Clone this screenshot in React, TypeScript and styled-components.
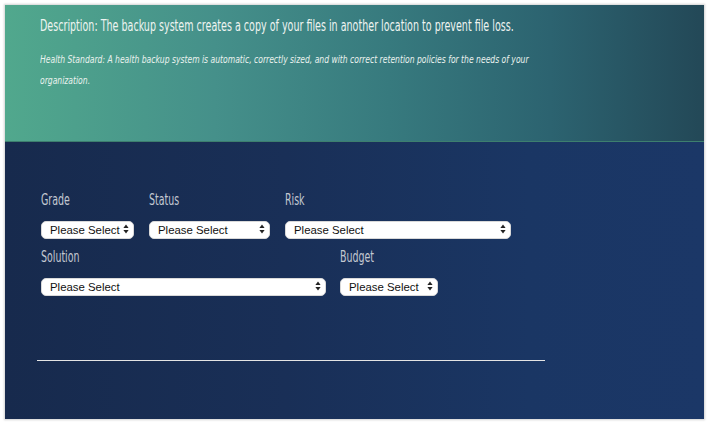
import React from "react";
import styled, { createGlobalStyle } from "styled-components";

const Global = createGlobalStyle`
  html, body { margin: 0; padding: 0; background: #ffffff; }
  body { width: 709px; height: 424px; overflow: hidden; }
`;

const CONDENSED = `"DejaVu Sans Condensed", "Liberation Sans", sans-serif`;

const Frame = styled.div`
  box-sizing: border-box;
  width: 709px;
  height: 424px;
  padding: 5px;
  background: #ffffff;
`;

const Card = styled.div`
  width: 699px;
  height: 414px;
  display: flex;
  flex-direction: column;
  box-shadow: 0 0 2px 1px rgba(0, 0, 0, 0.18);
  overflow: hidden;
`;

const Header = styled.header`
  box-sizing: border-box;
  height: 137px;
  padding: 11px 0 0 35px;
  background: linear-gradient(90deg, #51a88d 0%, #45908a 30%, #377a7e 55%, #2c6370 78%, #234857 100%);
  border-bottom: 1px solid #3d7f6e;
`;

const Description = styled.p`
  margin: 0;
  width: 680px;
  font-family: ${CONDENSED};
  font-size: 15px;
  line-height: 20px;
  color: #eef4f1;
  white-space: nowrap;
  transform: scaleX(0.708);
  transform-origin: left center;
`;

const Standard = styled.p`
  margin: 13px 0 0 0;
  width: 680px;
  font-family: ${CONDENSED};
  font-style: italic;
  font-size: 11px;
  line-height: 21px;
  color: #eaf2ee;
  transform: scaleX(0.772);
  transform-origin: left top;
`;

const Body = styled.main`
  flex: 1;
  box-sizing: border-box;
  padding: 50px 0 0 32px;
  background: linear-gradient(90deg, #172a4d 0%, #192f57 40%, #1a3664 75%, #1b3767 100%);
`;

const Form = styled.div`
  width: 508px;
  display: flex;
  flex-direction: column;
  gap: 11px;
  padding-left: 4px;
`;

const Row = styled.div<{ $gap: number }>`
  display: flex;
  gap: ${(p) => p.$gap}px;
`;

const Field = styled.div<{ $w: number }>`
  width: ${(p) => p.$w}px;
  display: flex;
  flex-direction: column;
  gap: 12px;
`;

const Label = styled.label`
  display: block;
  font-family: ${CONDENSED};
  font-size: 15px;
  line-height: 16px;
  color: #c3c8d1;
  white-space: nowrap;
  transform: scaleX(0.7);
  transform-origin: left center;
`;

const SelectWrap = styled.div`
  position: relative;
  height: 18px;
`;

const Select = styled.select`
  appearance: none;
  -webkit-appearance: none;
  box-sizing: border-box;
  width: 100%;
  height: 18px;
  margin: 0;
  padding: 0 10px 0 8px;
  border: 1px solid #d9d9d9;
  border-radius: 5px;
  background: #ffffff;
  font-family: "Liberation Sans", Arial, sans-serif;
  font-size: 11.4px;
  line-height: 16px;
  color: #111111;
  outline: none;
`;

const Arrows = styled.svg`
  position: absolute;
  right: 5px;
  top: 4px;
  width: 6px;
  height: 10px;
  pointer-events: none;
`;

const Divider = styled.hr`
  margin: 65px 0 0 0;
  width: 508px;
  height: 1px;
  border: 0;
  background: #e4e4e4;
`;

function Dropdown() {
  return (
    <SelectWrap>
      <Select defaultValue="">
        <option value="">Please Select</option>
      </Select>
      <Arrows viewBox="0 0 6 10">
        <path d="M3 0.5 L5.6 4 L0.4 4 Z" fill="#222" />
        <path d="M3 9.5 L5.6 6 L0.4 6 Z" fill="#222" />
      </Arrows>
    </SelectWrap>
  );
}

export default function App() {
  return (
    <>
      <Global />
      <Frame>
        <Card>
          <Header>
            <Description>
              Description: The backup system creates a copy of your files in another location to prevent file loss.
            </Description>
            <Standard>
              Health Standard: A health backup system is automatic, correctly sized, and with correct retention policies for the needs of your organization.
            </Standard>
          </Header>
          <Body>
            <Form>
              <Row $gap={15}>
                <Field $w={93}>
                  <Label>Grade</Label>
                  <Dropdown />
                </Field>
                <Field $w={121}>
                  <Label>Status</Label>
                  <Dropdown />
                </Field>
                <Field $w={226}>
                  <Label>Risk</Label>
                  <Dropdown />
                </Field>
              </Row>
              <Row $gap={14}>
                <Field $w={285}>
                  <Label>Solution</Label>
                  <Dropdown />
                </Field>
                <Field $w={98}>
                  <Label>Budget</Label>
                  <Dropdown />
                </Field>
              </Row>
            </Form>
            <Divider />
          </Body>
        </Card>
      </Frame>
    </>
  );
}
